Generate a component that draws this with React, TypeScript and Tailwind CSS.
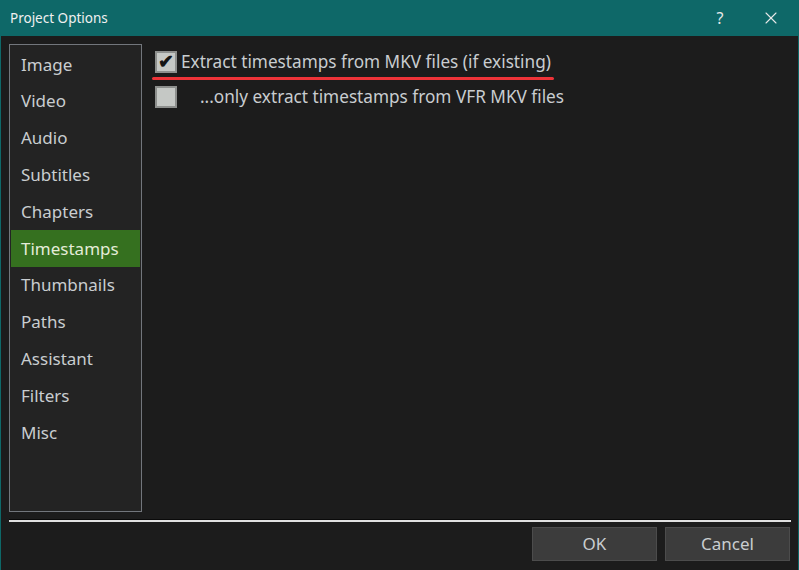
import { X } from "lucide-react";

const pages = [
  "Image",
  "Video",
  "Audio",
  "Subtitles",
  "Chapters",
  "Timestamps",
  "Thumbnails",
  "Paths",
  "Assistant",
  "Filters",
  "Misc",
];

function CheckBox({ checked }: { checked?: boolean }) {
  return (
    <div className="w-[22px] h-[22px] border-2 border-[#8d8f8d] bg-[#c5c8c5] flex items-center justify-center shrink-0">
      {checked && (
        <span className="text-[#141414] text-[19px] leading-none font-bold -mt-[1px]">✔</span>
      )}
    </div>
  );
}

export default function App() {
  return (
    <div
      className="w-[799px] h-[570px] flex flex-col bg-[#0e6868] text-[#c9cdd0]"
      style={{ fontFamily: '"Noto Sans", "Open Sans", sans-serif' }}
    >
      {/* Title bar */}
      <div className="h-[36px] flex items-center shrink-0">
        <div className="pl-[10px] text-[13.5px] text-[#f0f0f0] flex-1">Project Options</div>
        <div className="w-[46px] text-center text-[16px] text-[#e8e8e8]">?</div>
        <div className="w-[56px] flex justify-center">
          <X size={20} strokeWidth={1.3} className="text-[#e8e8e8]" />
        </div>
      </div>

      {/* Body */}
      <div className="flex-1 mx-px mb-px bg-[#1c1c1c] flex flex-col px-2 pt-2">
        <div className="flex flex-1 gap-3">
          <div className="w-[133px] h-[468px] border border-[#72767c] bg-[#232323] pt-[1px] px-[1px]">
            {pages.map((p) => (
              <div
                key={p}
                className={`h-[36.8px] flex items-center pl-[10px] text-[17px] ${
                  p === "Timestamps" ? "bg-[#35701f] text-[#e4ecd8]" : ""
                }`}
              >
                {p}
              </div>
            ))}
          </div>

          <div className="flex-1 pt-[7px] pl-[1px]">
            <div className="flex items-center gap-[4px] h-[22px]">
              <CheckBox checked />
              <span className="text-[17.2px]">Extract timestamps from MKV files (if existing)</span>
            </div>
            <div className="ml-[-3px] mt-[4px] w-[402px] h-[3px] rounded-full bg-[#ee3338]" />
            <div className="flex items-center gap-[23px] h-[22px] mt-[6px]">
              <CheckBox />
              <span className="text-[17.2px]">...only extract timestamps from VFR MKV files</span>
            </div>
          </div>
        </div>

        <div className="h-[3px] mt-[7px] border-t border-[#0a0a0a] bg-[#e0e0e0] mr-[-1px]" />

        <div className="flex justify-end gap-2 pt-[5px] pb-[9px]">
          <button className="w-[125px] h-[34px] bg-[#3c3c3c] border border-[#4c4c4c] text-[17px] text-[#c9cdd0]">
            OK
          </button>
          <button className="w-[125px] h-[34px] bg-[#3c3c3c] border border-[#4c4c4c] text-[17px] text-[#c9cdd0]">
            Cancel
          </button>
        </div>
      </div>
    </div>
  );
}
